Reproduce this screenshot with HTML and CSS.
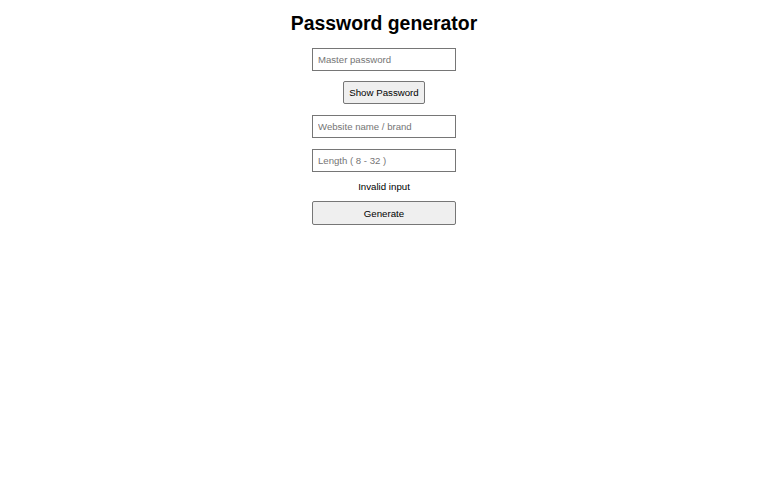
FILE: index.html
```html
<!DOCTYPE html>
<html>
<head>
<meta charset="utf-8">
<link rel="stylesheet" href="styles.css">
</head>
<body>
<main class="app">
  <h1 class="title">Password generator</h1>
  <input class="field" type="password" placeholder="Master password">
  <button class="btn btn-show">Show Password</button>
  <input class="field field-site" type="text" placeholder="Website name / brand">
  <input class="field field-len" type="text" placeholder="Length ( 8 - 32 )">
  <p class="msg">Invalid input</p>
  <button class="btn btn-gen">Generate</button>
</main>
</body>
</html>
```
FILE: styles.css
```css
html, body {
  margin: 0;
  padding: 0;
  background: #fff;
}
body {
  font-family: "Liberation Sans", Arial, sans-serif;
  color: #000;
}
.app {
  display: flex;
  flex-direction: column;
  align-items: center;
}
.title {
  margin: 12px 0 13px;
  font-size: 19.4px;
  line-height: 23px;
  font-weight: bold;
}
.field {
  box-sizing: border-box;
  width: 144px;
  height: 23px;
  margin: 0;
  padding: 0 5px;
  border: 1px solid #767676;
  border-radius: 0;
  font-family: "Liberation Sans", Arial, sans-serif;
  font-size: 9.6px;
  color: #000;
  background: #fff;
}
.field::placeholder {
  color: #757575;
}
.btn {
  box-sizing: border-box;
  height: 23px;
  margin: 0;
  padding: 0 2px;
  border: 1px solid #767676;
  border-radius: 2px;
  background: #efefef;
  font-family: "Liberation Sans", Arial, sans-serif;
  font-size: 9.7px;
  color: #000;
  white-space: nowrap;
}
.btn-show {
  width: 82px;
  margin-top: 10px;
}
.field-site {
  margin-top: 11px;
}
.field-len {
  margin-top: 11px;
}
.msg {
  margin: 9px 0 8px;
  font-size: 9.7px;
  line-height: 12px;
}
.btn-gen {
  width: 144px;
  height: 24px;
}
```
